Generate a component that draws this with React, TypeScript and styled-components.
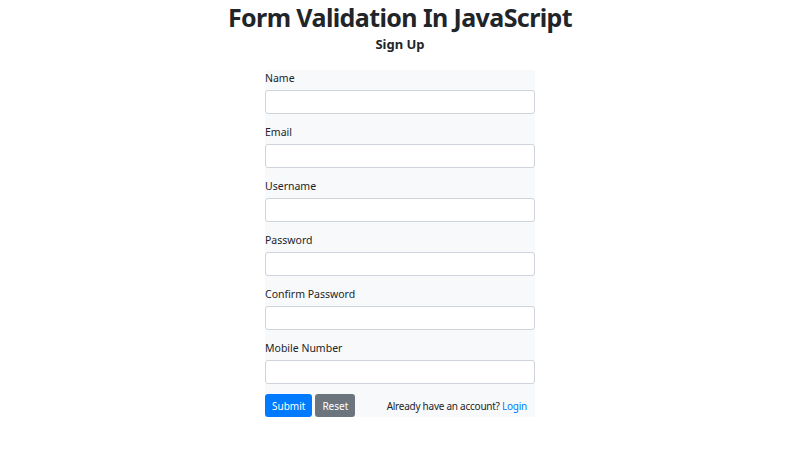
import { createGlobalStyle, styled } from "styled-components";

const GlobalStyle = createGlobalStyle`
  body {
    margin: 0;
    background: #ffffff;
    color: #212529;
    font-family: "Noto Sans", "Open Sans", sans-serif;
  }
`;

const fields = [
  { id: "name", label: "Name", type: "text" },
  { id: "email", label: "Email", type: "email" },
  { id: "username", label: "Username", type: "text" },
  { id: "password", label: "Password", type: "password" },
  { id: "cpassword", label: "Confirm Password", type: "password" },
  { id: "mobile", label: "Mobile Number", type: "text" },
];

export default function App() {
  return (
    <>
      <GlobalStyle />
      <Page>
        <Title>Form Validation In JavaScript</Title>
        <Subtitle>Sign Up</Subtitle>
        <Form onSubmit={(e) => e.preventDefault()}>
          {fields.map((f) => (
            <Group key={f.id}>
              <Label htmlFor={f.id}>{f.label}</Label>
              <Input id={f.id} type={f.type} />
            </Group>
          ))}
          <Actions>
            <Button type='submit' $variant='primary'>
              Submit
            </Button>
            <Button type='reset' $variant='secondary'>
              Reset
            </Button>
            <LoginText>
              Already have an account? <LoginLink href='#'>Login</LoginLink>
            </LoginText>
          </Actions>
        </Form>
      </Page>
    </>
  );
}

const Page = styled.div`
  display: flex;
  flex-direction: column;
  align-items: center;
`;

const Title = styled.h1`
  margin: 0;
  padding-top: 2px;
  font-size: 25px;
  line-height: 30px;
  letter-spacing: -0.6px;
  font-weight: 700;
  white-space: nowrap;
`;

const Subtitle = styled.h3`
  margin: 3px 0 0;
  font-size: 13px;
  line-height: 18px;
  font-weight: 700;
`;

const Form = styled.form`
  margin-top: 17px;
  width: 270px;
  background: #f8f9fa;
  display: flex;
  flex-direction: column;
`;

const Group = styled.div`
  display: flex;
  flex-direction: column;
  gap: 3px;
  margin-bottom: 10px;
`;

const Label = styled.label`
  font-size: 10.5px;
  line-height: 17px;
`;

const Input = styled.input`
  box-sizing: border-box;
  width: 100%;
  height: 24px;
  border: 1px solid #ced4da;
  border-radius: 3px;
  background: #fff;
  padding: 0 8px;
  font: inherit;
  font-size: 11px;
`;

const Actions = styled.div`
  display: flex;
  align-items: center;
  gap: 3px;
`;

const Button = styled.button<{ $variant: "primary" | "secondary" }>`
  height: 23px;
  padding: 0 7px;
  border: none;
  border-radius: 3px;
  color: #fff;
  font-family: inherit;
  font-size: 10px;
  background: ${({ $variant }) => ($variant === "primary" ? "#007bff" : "#6c757d")};
`;

const LoginText = styled.span`
  margin-left: auto;
  padding-right: 8px;
  font-size: 10px;
  letter-spacing: -0.25px;
  white-space: nowrap;
`;

const LoginLink = styled.a`
  color: #007bff;
  text-decoration: none;
`;
